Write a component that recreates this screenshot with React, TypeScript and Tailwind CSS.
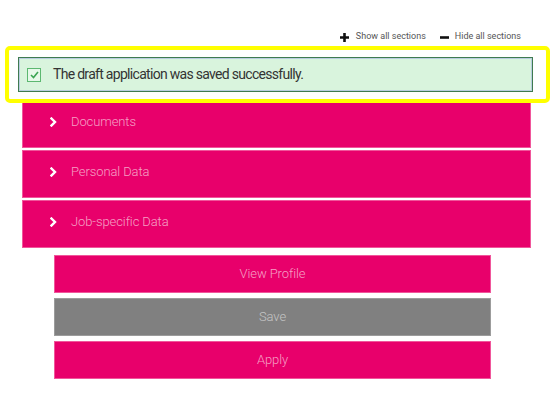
import { ReactNode } from "react";

function Chevron() {
  return (
    <svg width="7" height="10" viewBox="0 0 7 10" className="shrink-0">
      <path d="M1.5 1.5 L5 5 L1.5 8.5" fill="none" stroke="#ffffff" strokeWidth="2.4" strokeLinecap="square" />
    </svg>
  );
}

function SectionRow({ label }: { label: string }) {
  return (
    <div className="h-[48px] flex items-center pl-[27px] pb-[4px] gap-[14px] bg-[#e8006b] border border-[#f0569b]">
      <Chevron />
      <span className="text-[13px] font-light text-[#f5a0c5] tracking-[-0.1px] [font-family:Roboto,sans-serif]">{label}</span>
    </div>
  );
}

function ActionButton({ children, gray = false }: { children: ReactNode; gray?: boolean }) {
  return (
    <button
      className={`h-[38px] w-full flex items-center justify-center text-[13px] font-light tracking-[-0.1px] [font-family:Roboto,sans-serif] border ${
        gray ? "bg-[#808080] border-[#9c9c9c] text-[#c4c4c4]" : "bg-[#e8006b] border-[#f0569b] text-[#f5a0c5]"
      }`}
    >
      {children}
    </button>
  );
}

export default function App() {
  return (
    <div className="w-[558px] h-[400px] bg-white relative overflow-hidden [font-family:'Liberation_Sans',Arial,sans-serif]">
      {/* expand / collapse toggles */}
      <div className="flex justify-end items-center gap-[14px] pr-[37px] pt-[31px] h-[43px] text-[9px] text-[#555] [font-family:Roboto,sans-serif]">
        <span className="flex items-center gap-[7px]">
          <svg width="9" height="9" viewBox="0 0 9 9">
            <path d="M4.5 0 V9 M0 4.5 H9" stroke="#111" strokeWidth="2.6" />
          </svg>
          Show all sections
        </span>
        <span className="flex items-center gap-[6px]">
          <svg width="9" height="9" viewBox="0 0 9 9">
            <path d="M0 4.5 H9" stroke="#111" strokeWidth="2.6" />
          </svg>
          Hide all sections
        </span>
      </div>

      {/* success message */}
      <div className="ml-[18px] mt-[14px] w-[515px] h-[35px] flex items-center gap-[12px] pl-[8px] border border-[#3f7b50] bg-[#d9f4dd] shadow-[inset_0_0_0_1px_#b9cde0]">
        <span className="w-[14px] h-[14px] flex items-center justify-center border border-[#5cb870] bg-[#e6f8e9]">
          <svg width="9" height="8" viewBox="0 0 9 8">
            <path d="M1 4 L3.5 6.5 L8 1" fill="none" stroke="#3aa452" strokeWidth="1.6" />
          </svg>
        </span>
        <span className="text-[14px] text-[#333] tracking-[-0.7px] [font-family:Roboto,sans-serif]">
          The draft application was saved successfully.
        </span>
      </div>

      {/* highlight frame around the message */}
      <div className="absolute left-[5px] top-[46px] w-[545px] h-[57px] border-[4px] border-[#ffff00] rounded-[5px] pointer-events-none" />

      <div className="ml-[22px] mt-[8px] w-[509px] flex flex-col gap-[2px]">
        <SectionRow label="Documents" />
        <SectionRow label="Personal Data" />
        <SectionRow label="Job-specific Data" />
      </div>

      <div className="ml-[54px] mt-[7px] w-[437px] flex flex-col gap-[5px]">
        <ActionButton>View Profile</ActionButton>
        <ActionButton gray>Save</ActionButton>
        <ActionButton>Apply</ActionButton>
      </div>
    </div>
  );
}
